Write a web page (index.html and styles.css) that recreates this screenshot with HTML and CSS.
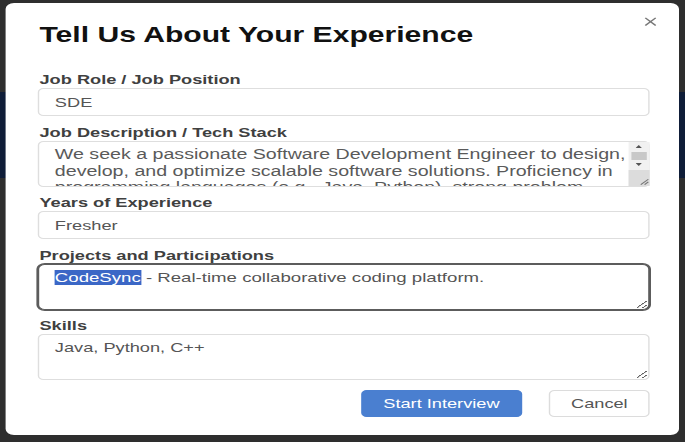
FILE: index.html
```html
<!DOCTYPE html>
<html lang="en">
<head>
    <meta charset="UTF-8">
    <title>Tell Us About Your Experience</title>
    <link rel="stylesheet" href="styles.css">
</head>
<body>
<div class="screen">
    <div class="stage">
        <div class="modal">
            <div class="modal-head">
                <h2>Tell Us About Your Experience</h2>
                <button class="close" type="button" aria-label="Close">
                    <svg viewBox="0 0 10 10" preserveAspectRatio="none"><path d="M1 1L9 9M9 1L1 9"/></svg>
                </button>
            </div>
            <form class="form">
                <div class="group">
                    <label for="role">Job Role / Job Position</label>
                    <input id="role" class="field" type="text" value="SDE">
                </div>
                <div class="group">
                    <label for="desc">Job Description / Tech Stack</label>
                    <div class="scroll-box">
                        <textarea id="desc" class="field area">We seek a passionate Software Development Engineer to design,
develop, and optimize scalable software solutions. Proficiency in
programming languages (e.g., Java, Python), strong problem-
solving skills, and experience with databases are required.</textarea>
                        <div class="scrollbar">
                            <div class="sb-btn"><svg viewBox="0 0 6 4"><path d="M0 4L3 0L6 4Z"/></svg></div>
                            <div class="sb-thumb"></div>
                            <div class="sb-btn"><svg viewBox="0 0 6 4"><path d="M0 0L6 0L3 4Z"/></svg></div>
                            <div class="sb-track"></div>
                            <div class="sb-corner">
                                <svg viewBox="0 0 10 10"><path d="M9 3L3 9M9 6L6 9"/></svg>
                            </div>
                        </div>
                    </div>
                </div>
                <div class="group">
                    <label for="years">Years of Experience</label>
                    <input id="years" class="field" type="text" value="Fresher">
                </div>
                <div class="group">
                    <label for="projects">Projects and Participations</label>
                    <div id="projects" class="field area focused" contenteditable="true"><span class="sel">CodeSync</span> - Real-time collaborative coding platform.</div>
                </div>
                <div class="group">
                    <label for="skills">Skills</label>
                    <textarea id="skills" class="field area">Java, Python, C++</textarea>
                </div>
                <div class="actions">
                    <button type="button" class="btn primary">Start Interview</button>
                    <button type="button" class="btn">Cancel</button>
                </div>
            </form>
        </div>
    </div>
</div>
</body>
</html>
```

FILE: styles.css
```css
* {
    box-sizing: border-box;
}
html, body {
    margin: 0;
}
body {
    background: #2c2c2c;
    font-family: "Liberation Sans", Arial, sans-serif;
}

/* dimmed page behind the dialog */
.screen {
    width: 685px;
    height: 442px;
    overflow: hidden;
    background: linear-gradient(#2e2e2e 0 92px, #0f1d38 92px 178px, #2e2e2e 178px);
}

/* the capture is stretched sideways, so the whole dialog is too */
.stage {
    width: 489.3px;
    height: 442px;
    padding: 3px 0 0 4.3px;
    transform: scaleX(1.4);
    transform-origin: 0 0;
}

.modal {
    width: 480.7px;
    height: 432px;
    padding: 19px 20.7px 0 22.9px;
    background: #fff;
    border-radius: 6px;
}

.modal-head {
    display: flex;
    justify-content: space-between;
    align-items: flex-start;
}
.modal-head h2 {
    margin: 0;
    padding-left: 1px;
    font-size: 21.5px;
    line-height: 26px;
    font-weight: 700;
    color: #111;
}
.close {
    margin: -4.7px -5px 0 0;
    padding: 0;
    border: 0;
    background: none;
    width: 9.3px;
    height: 9.4px;
}
.close svg {
    display: block;
    width: 9.3px;
    height: 9.4px;
    fill: none;
    stroke: #777;
    stroke-width: 1.3;
}

.form {
    margin-top: 24px;
}
.group + .group {
    margin-top: 8.6px;
}
.group label {
    display: block;
    padding-left: 1px;
    margin-bottom: 1px;
    font-size: 13px;
    line-height: 15px;
    font-weight: 700;
    color: #404040;
}

.field {
    display: block;
    width: 100%;
    height: 28px;
    padding: 5px 11px;
    border: 1px solid #dedede;
    border-radius: 4px;
    background: #fff;
    font: 13px/16px "Liberation Sans", Arial, sans-serif;
    color: #555;
    outline: none;
}
.area {
    height: 46px;
    resize: vertical;
    overflow: hidden;
}
.focused {
    font-size: 13.3px;
    border-color: #5c5c5c;
    box-shadow: 0 0 0 1px #5c5c5c;
    border-radius: 5px;
}
.sel {
    background: #3b67c6;
    color: #fff;
}

/* classic scrollbar of the description box */
.scroll-box {
    position: relative;
}
.scroll-box .area {
    padding: 4.5px 12px 0 11px;
    resize: none;
    font-size: 14px;
    line-height: 16.5px;
    color: #5a5a5a;
}
.scrollbar {
    position: absolute;
    top: 1px;
    right: 0.7px;
    bottom: 1px;
    width: 14.3px;
    display: flex;
    flex-direction: column;
    background: #f1f1f1;
}
.sb-btn {
    height: 10px;
    display: flex;
    align-items: center;
    justify-content: center;
}
.sb-btn svg {
    width: 4.5px;
    height: 3px;
    fill: #555;
}
.sb-thumb {
    height: 8px;
    margin: 0 2px;
    background: #c8c8c8;
}
.sb-track {
    flex: 1;
}
.sb-corner {
    height: 16px;
    display: flex;
    align-items: flex-end;
    justify-content: flex-end;
    background: #dcdcdc;
}
.sb-corner svg {
    width: 9px;
    height: 10px;
    fill: none;
    stroke: #777;
    stroke-width: 1;
}

.actions {
    display: flex;
    justify-content: flex-end;
    gap: 18.9px;
    margin-top: 9.6px;
}
.btn {
    width: 72.4px;
    height: 27px;
    padding: 0;
    border: 1px solid #dcdcdc;
    border-radius: 4px;
    background: #fff;
    font: 13px "Liberation Sans", Arial, sans-serif;
    color: #555;
}
.btn.primary {
    width: 115.4px;
    border-color: #4a7fd0;
    background: #4a7fd0;
    color: #fff;
}
```
